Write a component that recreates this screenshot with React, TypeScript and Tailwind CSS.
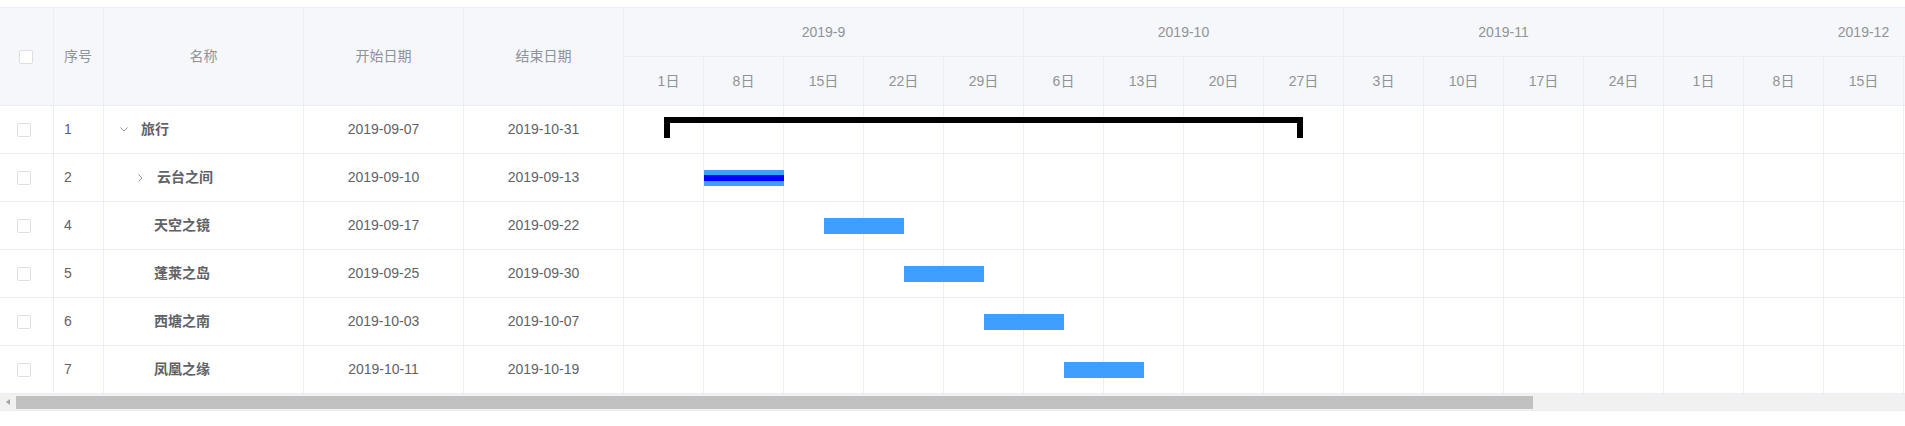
import React from 'react';

// 甘特图数据
interface Task {
  id: number;
  name: string;
  start: string;
  end: string;
  level: number;
  expand?: 'open' | 'closed';
  bar: { kind: 'summary' | 'parent' | 'task'; left: number; width: number };
}

const months = [
  { label: '2019-9', days: [1, 8, 15, 22, 29] },
  { label: '2019-10', days: [6, 13, 20, 27] },
  { label: '2019-11', days: [3, 10, 17, 24] },
  { label: '2019-12', days: [1, 8, 15, 22, 29] },
  { label: '2020-1', days: [5, 12, 19, 26] },
];

const weekCount = months.reduce((n, m) => n + m.days.length, 0);

const tasks: Task[] = [
  { id: 1, name: '旅行', start: '2019-09-07', end: '2019-10-31', level: 0, expand: 'open', bar: { kind: 'summary', left: 40, width: 639 } },
  { id: 2, name: '云台之间', start: '2019-09-10', end: '2019-09-13', level: 1, expand: 'closed', bar: { kind: 'parent', left: 80, width: 80 } },
  { id: 4, name: '天空之镜', start: '2019-09-17', end: '2019-09-22', level: 1, bar: { kind: 'task', left: 200, width: 80 } },
  { id: 5, name: '蓬莱之岛', start: '2019-09-25', end: '2019-09-30', level: 1, bar: { kind: 'task', left: 280, width: 80 } },
  { id: 6, name: '西塘之南', start: '2019-10-03', end: '2019-10-07', level: 1, bar: { kind: 'task', left: 360, width: 80 } },
  { id: 7, name: '凤凰之缘', start: '2019-10-11', end: '2019-10-19', level: 1, bar: { kind: 'task', left: 440, width: 80 } },
];

function Checkbox({ className = '' }: { className?: string }) {
  return <span className={`block w-[14px] h-[14px] rounded-[2px] border border-[#dcdfe6] bg-white ${className}`} />;
}

function Chevron({ open }: { open: boolean }) {
  return open ? (
    <svg width="8" height="5" viewBox="0 0 8 5" fill="none">
      <path d="M0.5 0.5 L4 4 L7.5 0.5" stroke="#909399" strokeWidth="1" />
    </svg>
  ) : (
    <svg width="5" height="8" viewBox="0 0 5 8" fill="none">
      <path d="M0.5 0.5 L4 4 L0.5 7.5" stroke="#909399" strokeWidth="1" />
    </svg>
  );
}

function Bar({ bar }: { bar: Task['bar'] }) {
  if (bar.kind === 'summary') {
    return (
      <div
        className="absolute top-[11px] h-[21px] border-t-[6px] border-x-[6px] border-black"
        style={{ left: bar.left, width: bar.width }}
      />
    );
  }
  return (
    <div className="absolute top-[16px] h-[16px] bg-[#409eff]" style={{ left: bar.left, width: bar.width }}>
      {bar.kind === 'parent' && <div className="mt-[5px] h-[6px] bg-[#0000ff]" />}
    </div>
  );
}

export default function App() {
  return (
    <div className="w-[1905px] h-[426px] bg-white overflow-hidden font-['Liberation_Sans','Noto_Sans_CJK_SC',sans-serif] text-[14px]">
      <div className="mt-[7px] border-t border-[#ebeef5] overflow-hidden">
        <div className="w-max">
          {/* 表头 */}
          <div className="flex bg-[#f5f7fa] text-[#909399] border-b border-[#ebeef5]">
            <div className="w-[54px] h-[97px] border-r border-[#ebeef5] flex items-center justify-center">
              <Checkbox className="ml-[-1px]" />
            </div>
            <div className="w-[50px] border-r border-[#ebeef5] flex items-center pl-[10px]">序号</div>
            <div className="w-[200px] border-r border-[#ebeef5] flex items-center justify-center">名称</div>
            <div className="w-[160px] border-r border-[#ebeef5] flex items-center justify-center">开始日期</div>
            <div className="w-[160px] border-r border-[#ebeef5] flex items-center justify-center">结束日期</div>
            <div className="flex">
              {months.map((m, mi) => (
                <div key={m.label} className="flex flex-col">
                  <div className="h-[49px] border-b border-r border-[#ebeef5] flex items-center justify-center">{m.label}</div>
                  <div className="flex h-[48px]">
                    {m.days.map((d, di) => (
                      <div
                        key={d}
                        className={`w-[80px] border-r border-[#ebeef5] flex items-center justify-center ${mi === 0 && di === 0 ? 'pl-[10px]' : ''}`}
                      >
                        {d}日
                      </div>
                    ))}
                  </div>
                </div>
              ))}
            </div>
          </div>

          {/* 表体 */}
          {tasks.map(t => (
            <div key={t.id} className="flex h-[48px] border-b border-[#ebeef5] text-[#606266]">
              <div className="w-[54px] border-r border-[#ebeef5] flex items-center">
                <Checkbox className="ml-[17px]" />
              </div>
              <div className="w-[50px] border-r border-[#ebeef5] flex items-center pl-[10px]">{t.id}</div>
              <div className="w-[200px] border-r border-[#ebeef5] flex items-center font-bold">
                {t.expand ? (
                  <>
                    <span
                      className={`w-[20px] flex items-center justify-center ${t.level === 0 ? 'ml-[10px]' : 'ml-[26px]'}`}
                    >
                      <Chevron open={t.expand === 'open'} />
                    </span>
                    <span className="ml-[7px]">{t.name}</span>
                  </>
                ) : (
                  <span className="ml-[50px]">{t.name}</span>
                )}
              </div>
              <div className="w-[160px] border-r border-[#ebeef5] flex items-center justify-center">{t.start}</div>
              <div className="w-[160px] border-r border-[#ebeef5] flex items-center justify-center">{t.end}</div>
              <div className="relative flex">
                {Array.from({ length: weekCount }).map((_, i) => (
                  <div key={i} className="w-[80px] border-r border-[#ebeef5]" />
                ))}
                <Bar bar={t.bar} />
              </div>
            </div>
          ))}
        </div>
      </div>

      {/* 横向滚动条 */}
      <div className="flex h-[17px] bg-[#f1f1f1] border-b border-[#ebeef5]">
        <div className="w-[16px] flex items-center justify-center">
          <span className="block w-0 h-0 border-y-[3px] border-y-transparent border-r-[4px] border-r-[#a3a3a3]" />
        </div>
        <div className="w-[1517px] mt-[2px] h-[13px] bg-[#c1c1c1]" />
      </div>
    </div>
  );
}
